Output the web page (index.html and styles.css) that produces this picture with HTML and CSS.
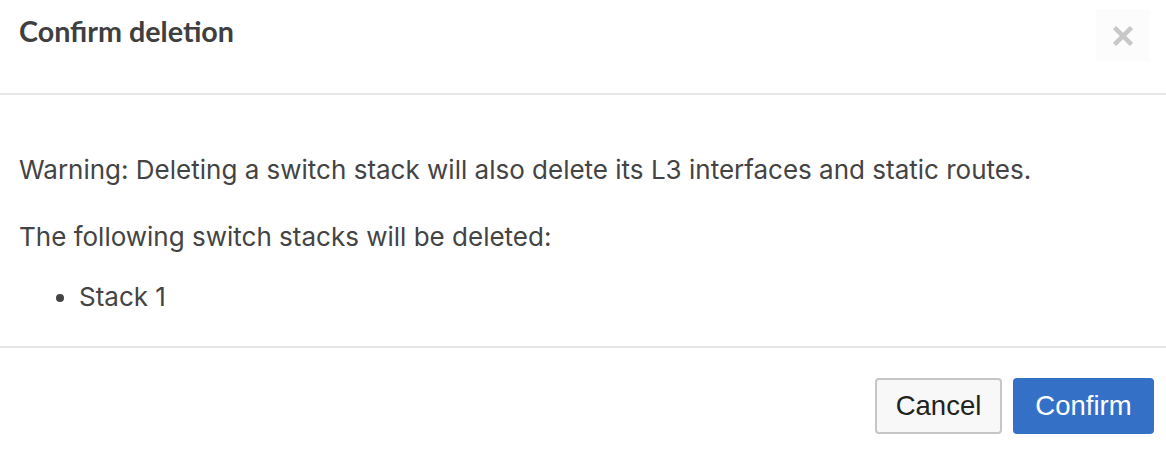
FILE: index.html
```html
<!DOCTYPE html>
<html>
<head>
<meta charset="utf-8">
<link rel="stylesheet" href="styles.css">
</head>
<body>
<div class="dialog">
  <div class="header">
    <h1 class="title">Confirm deletion</h1>
    <button class="close" aria-label="Close">
      <svg width="20" height="20" viewBox="0 0 20 20"><path d="M1.5 1.5 L18.5 18.5 M18.5 1.5 L1.5 18.5" stroke="#c8c8c8" stroke-width="4.5" stroke-linecap="butt"/></svg>
    </button>
  </div>
  <div class="content">
    <p class="warn">Warning: Deleting a switch stack will also delete its L3 interfaces and static routes.</p>
    <p class="lead">The following switch stacks will be deleted:</p>
    <ul class="items">
      <li>Stack 1</li>
    </ul>
  </div>
  <div class="footer">
    <button class="btn btn-cancel">Cancel</button>
    <button class="btn btn-confirm">Confirm</button>
  </div>
</div>
</body>
</html>
```

FILE: styles.css
```css
html, body {
  margin: 0;
  padding: 0;
  background: #ffffff;
}
.dialog {
  width: 1166px;
  height: 454px;
  display: flex;
  flex-direction: column;
  font-family: Inter, "Liberation Sans", sans-serif;
  color: #444444;
}
.header {
  height: 95px;
  box-sizing: border-box;
  border-bottom: 2px solid #e6e6e6;
  display: flex;
  justify-content: space-between;
  align-items: flex-start;
  padding: 9px 16px 0 19px;
}
.title {
  margin: 7px 0 0 0;
  font-family: Lato, "Open Sans", sans-serif;
  font-weight: 700;
  font-size: 28.7px;
  line-height: 30px;
  color: #3f3f3f;
}
.close {
  width: 54px;
  height: 53px;
  border: none;
  background: #fcfcfc;
  display: flex;
  align-items: center;
  justify-content: center;
  padding: 0;
}
.content {
  height: 253px;
  box-sizing: border-box;
  border-bottom: 2px solid #e6e6e6;
  padding: 60px 19px 0 19px;
  font-size: 26px;
  line-height: 30px;
}
.content p {
  margin: 0;
}
.warn {
  margin-bottom: 37px !important;
}
.items {
  margin: 30px 0 0 0;
  padding-left: 60px;
  list-style: disc;
}
.footer {
  flex: 1;
  display: flex;
  justify-content: flex-end;
  align-items: flex-start;
  gap: 11px;
  padding: 30px 12px 0 0;
}
.btn {
  height: 56px;
  border-radius: 4px;
  font-family: "Liberation Sans", Arial, sans-serif;
  font-size: 27.5px;
  padding: 0;
  box-sizing: border-box;
}
.btn-cancel {
  width: 127px;
  background: #f8f8f8;
  border: 2px solid #c6c6c6;
  color: #222222;
}
.btn-confirm {
  width: 141px;
  background: #3570c7;
  border: none;
  color: #ffffff;
}
```
